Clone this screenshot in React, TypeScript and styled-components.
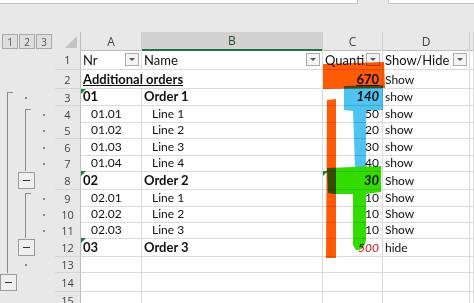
import React from "react";
import styled, { createGlobalStyle } from "styled-components";

const GlobalStyle = createGlobalStyle`
  body {
    margin: 0;
    background: #ffffff;
    overflow: hidden;
  }
`;

const COLS = "55px 26px 61px 181px 60px 87px 1fr";

const Root = styled.div`
  position: relative;
  width: 474px;
  height: 303px;
  overflow: hidden;
  font-family: "Lato", "Liberation Sans", sans-serif;
  font-size: 12px;
  color: #111;
`;

const TopBar = styled.div`
  height: 32px;
  background: #e8e8e8;
  display: flex;
  gap: 30px;
  align-items: flex-start;
`;

const Field = styled.div<{ $w: string; $side: "left" | "right" }>`
  flex: ${(p) => p.$w};
  height: 3px;
  background: #ffffff;
  border-bottom: 1px solid #c6c6c6;
  border-${(p) => p.$side}: 1px solid #c6c6c6;
`;

const Row = styled.div<{ $h: number }>`
  display: grid;
  grid-template-columns: ${COLS};
  height: ${(p) => p.$h}px;
`;

const HeaderRow = styled(Row)`
  background: #e8e8e8;
`;

const LevelButtons = styled.div`
  display: flex;
  gap: 1px;
  padding-left: 2px;
  align-items: center;
`;

const LevelButton = styled.div`
  width: 16px;
  height: 15px;
  box-sizing: border-box;
  border: 1px solid #a9a9a9;
  background: #dedede;
  color: #555;
  font-family: "Open Sans", "Liberation Sans", sans-serif;
  font-size: 10px;
  display: flex;
  align-items: center;
  justify-content: center;
`;

const Corner = styled.div`
  border-right: 1px solid #bdbdbd;
  border-bottom: 1px solid #bdbdbd;
  display: flex;
  align-items: flex-end;
  justify-content: flex-end;
  padding: 0 3px 2px 0;
`;

const CornerMark = styled.div`
  width: 0;
  height: 0;
  border-left: 12px solid transparent;
  border-bottom: 12px solid #c4c4c4;
`;

const ColHead = styled.div<{ $active?: boolean }>`
  background: ${(p) => (p.$active ? "#d2d2d2" : "#e8e8e8")};
  border-right: 1px solid #d0d0d0;
  border-bottom: ${(p) => (p.$active ? "2px solid #217346" : "1px solid #bdbdbd")};
  color: ${(p) => (p.$active ? "#2a4a33" : "#444")};
  font-family: "Open Sans", "Liberation Sans", sans-serif;
  font-size: 12px;
  display: flex;
  align-items: center;
  justify-content: center;
`;

const Gutter = styled.div`
  background: #e8e8e8;
  display: grid;
  grid-template-columns: 18px 18px 19px;
`;

const Track = styled.div<{ $center?: boolean }>`
  display: flex;
  align-items: ${(p) => (p.$center ? "center" : "stretch")};
  min-height: 0;
`;

const VLine = styled.div`
  width: 1px;
  margin-left: 7px;
  background: #8a8a8a;
`;

const Bracket = styled.div`
  width: 5px;
  margin: 3px 0 0 7px;
  border-left: 1px solid #8a8a8a;
  border-top: 1px solid #8a8a8a;
`;

const Dot = styled.div`
  width: 2px;
  height: 2px;
  margin-left: 7px;
  background: #8c8c8c;
`;

const Collapse = styled.div`
  width: 17px;
  height: 17px;
  box-sizing: border-box;
  border: 1px solid #9a9a9a;
  background: #efefef;
  display: flex;
  align-items: center;
  justify-content: center;
`;

const Minus = styled.div`
  width: 7px;
  height: 1px;
  background: #333;
`;

const RowHead = styled.div`
  background: #e8e8e8;
  border-right: 1px solid #bdbdbd;
  border-bottom: 1px solid #d6d6d6;
  color: #444;
  font-family: "Open Sans", "Liberation Sans", sans-serif;
  font-size: 11px;
  display: flex;
  align-items: center;
  justify-content: center;
`;

const Cell = styled.div<{
  $bold?: boolean;
  $italic?: boolean;
  $underline?: boolean;
  $indent?: boolean;
  $right?: boolean;
  $spill?: boolean;
  $red?: boolean;
}>`
  position: relative;
  border-right: ${(p) => (p.$spill ? "none" : "1px solid #dadada")};
  border-bottom: 1px solid #dadada;
  display: flex;
  align-items: flex-end;
  justify-content: ${(p) => (p.$right ? "flex-end" : "flex-start")};
  padding: 0 ${(p) => (p.$right ? 3 : 0)}px 1px ${(p) => (p.$indent ? 10 : 2)}px;
  white-space: nowrap;
  line-height: 15px;
  font-size: ${(p) => (p.$bold ? 13 : 12)}px;
  font-weight: ${(p) => (p.$bold ? 700 : 400)};
  font-style: ${(p) => (p.$italic ? "italic" : "normal")};
  text-decoration: ${(p) => (p.$underline ? "underline" : "none")};
  color: ${(p) => (p.$red ? "#e01010" : "#111")};
  min-width: 0;
`;

const Flag = styled.div`
  position: absolute;
  top: 0;
  left: 0;
  width: 0;
  height: 0;
  border-top: 5px solid #1e7b3a;
  border-right: 5px solid transparent;
`;

const FilterCell = styled.div`
  border-right: 1px solid #dadada;
  border-bottom: 1px solid #dadada;
  display: flex;
  align-items: flex-end;
  gap: 1px;
  padding: 0 2px 3px 2px;
  min-width: 0;
  line-height: 15px;
  font-size: 13px;
`;

const FilterLabel = styled.span`
  flex: 1;
  overflow: hidden;
  white-space: nowrap;
  margin-bottom: -2px;
`;

const Dropdown = styled.div`
  flex: none;
  width: 14px;
  height: 13px;
  box-sizing: border-box;
  border: 1px solid #ababab;
  background: #f4f4f4;
  display: flex;
  align-items: center;
  justify-content: center;
`;

const Arrow = styled.div`
  width: 0;
  height: 0;
  border-left: 3px solid transparent;
  border-right: 3px solid transparent;
  border-top: 3px solid #555;
`;

const Marker = styled.svg`
  position: absolute;
  top: 0;
  left: 0;
  pointer-events: none;
  mix-blend-mode: multiply;
  path {
    mix-blend-mode: multiply;
  }
`;

type Kind = "" | "line" | "start" | "dot" | "button";

type Spec = {
  t: string;
  bold?: boolean;
  italic?: boolean;
  underline?: boolean;
  indent?: boolean;
  spill?: boolean;
  red?: boolean;
  flag?: boolean;
};

type RowData = {
  n: number;
  h: number;
  o: [Kind, Kind, Kind];
  a?: Spec;
  b?: Spec;
  c?: Spec;
  d?: string;
};

const rows: RowData[] = [
  { n: 2, h: 19, o: ["", "", ""], a: { t: "Additional orders", bold: true, underline: true, spill: true }, c: { t: "670", bold: true, underline: true }, d: "Show" },
  { n: 3, h: 17, o: ["start", "dot", ""], a: { t: "01", bold: true, flag: true }, b: { t: "Order 1", bold: true }, c: { t: "140", bold: true, italic: true }, d: "show" },
  { n: 4, h: 16, o: ["line", "start", "dot"], a: { t: "01.01", indent: true }, b: { t: "Line 1", indent: true }, c: { t: "50" }, d: "show" },
  { n: 5, h: 17, o: ["line", "line", "dot"], a: { t: "01.02", indent: true }, b: { t: "Line 2", indent: true }, c: { t: "20" }, d: "show" },
  { n: 6, h: 16, o: ["line", "line", "dot"], a: { t: "01.03", indent: true }, b: { t: "Line 3", indent: true }, c: { t: "30" }, d: "show" },
  { n: 7, h: 16, o: ["line", "line", "dot"], a: { t: "01.04", indent: true }, b: { t: "Line 4", indent: true }, c: { t: "40" }, d: "show" },
  { n: 8, h: 19, o: ["line", "button", ""], a: { t: "02", bold: true, flag: true }, b: { t: "Order 2", bold: true }, c: { t: "30", bold: true, italic: true, flag: true }, d: "Show" },
  { n: 9, h: 16, o: ["line", "start", "dot"], a: { t: "02.01", indent: true }, b: { t: "Line 1", indent: true }, c: { t: "10" }, d: "Show" },
  { n: 10, h: 16, o: ["line", "line", "dot"], a: { t: "02.02", indent: true }, b: { t: "Line 2", indent: true }, c: { t: "10" }, d: "Show" },
  { n: 11, h: 16, o: ["line", "line", "dot"], a: { t: "02.03", indent: true }, b: { t: "Line 3", indent: true }, c: { t: "10" }, d: "Show" },
  { n: 12, h: 19, o: ["line", "button", ""], a: { t: "03", bold: true, flag: true }, b: { t: "Order 3", bold: true }, c: { t: "500", italic: true, red: true }, d: "hide" },
  { n: 13, h: 16, o: ["line", "dot", ""] },
  { n: 14, h: 19, o: ["button", "", ""] },
  { n: 15, h: 18, o: ["", "", ""] },
];

const OutlineTrack = ({ kind }: { kind: Kind }) => {
  if (kind === "line") return <Track><VLine /></Track>;
  if (kind === "start") return <Track><Bracket /></Track>;
  if (kind === "dot") return <Track $center><Dot /></Track>;
  if (kind === "button")
    return (
      <Track $center>
        <Collapse>
          <Minus />
        </Collapse>
      </Track>
    );
  return <Track />;
};

const DataCell = ({ spec, right }: { spec?: Spec; right?: boolean }) => (
  <Cell
    $bold={spec?.bold}
    $italic={spec?.italic}
    $underline={spec?.underline}
    $indent={spec?.indent}
    $spill={spec?.spill}
    $red={spec?.red}
    $right={right}
  >
    {spec?.flag && <Flag />}
    {spec?.t}
  </Cell>
);

const Filter = ({ label }: { label: string }) => (
  <FilterCell>
    <FilterLabel>{label}</FilterLabel>
    <Dropdown>
      <Arrow />
    </Dropdown>
  </FilterCell>
);

const App = () => {
  return (
    <Root>
      <GlobalStyle />
      <TopBar>
        <Field $w="0 0 357px" $side="right" />
        <Field $w="1" $side="left" />
      </TopBar>
      <HeaderRow $h={18}>
        <LevelButtons>
          <LevelButton>1</LevelButton>
          <LevelButton>2</LevelButton>
          <LevelButton>3</LevelButton>
        </LevelButtons>
        <Corner>
          <CornerMark />
        </Corner>
        <ColHead>A</ColHead>
        <ColHead $active>B</ColHead>
        <ColHead>C</ColHead>
        <ColHead>D</ColHead>
        <ColHead />
      </HeaderRow>
      <Row $h={20}>
        <Gutter />
        <RowHead>1</RowHead>
        <Filter label="Nr" />
        <Filter label="Name" />
        <Filter label="Quantity" />
        <Filter label="Show/Hide" />
        <Cell />
      </Row>
      {rows.map((r) => (
        <Row key={r.n} $h={r.h}>
          <Gutter>
            {r.o.map((k, i) => (
              <OutlineTrack key={i} kind={k} />
            ))}
          </Gutter>
          <RowHead>{r.n}</RowHead>
          <DataCell spec={r.a} />
          <DataCell spec={r.b} />
          <DataCell spec={r.c} right />
          <DataCell spec={r.d ? { t: r.d } : undefined} />
          <Cell />
        </Row>
      ))}
      <Marker width="474" height="303" viewBox="0 0 474 303">
        <path d="M323 64 L384 62 L385 88 L323 89 Z" fill="#ff5a05" />
        <path d="M327 100 L336 99 L336 258 L326 258 Z" fill="#ff5a05" />
        <path d="M344 86 L383 85 L383 110 L366 111 L366 167 L355 167 L353 111 L344 110 Z" fill="#4fc4f2" />
        <path d="M327 168 L381 166 L381 192 L366 194 L366 240 Q364 251 356 250 L353 245 L353 194 L333 194 L328 193 Z" fill="#33dc00" />
      </Marker>
    </Root>
  );
};

export default App;
